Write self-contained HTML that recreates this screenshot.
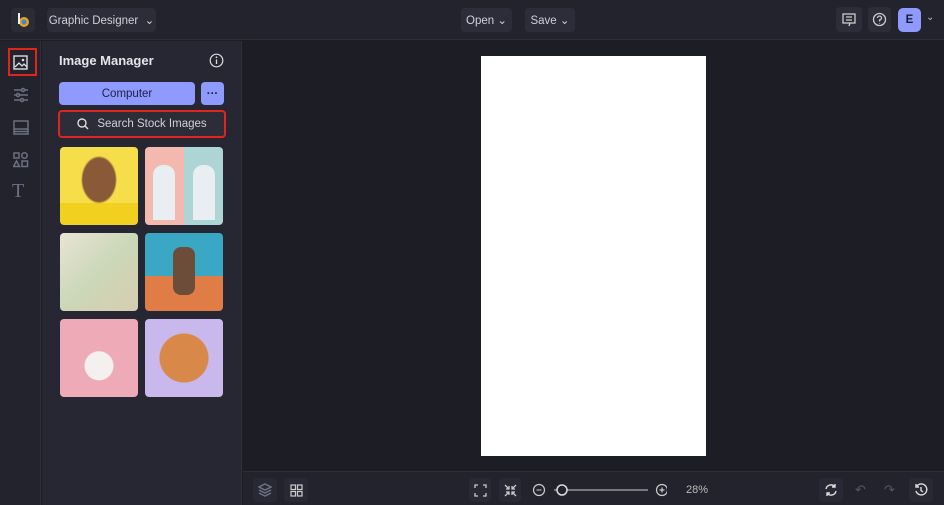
<!DOCTYPE html><html><head><style>
*{margin:0;padding:0;box-sizing:border-box}
body{width:944px;height:505px;overflow:hidden;background:#1c1d25;font-family:"Liberation Sans",sans-serif;position:relative;color:#dfe0e8}
.a{position:absolute}
.btn{position:absolute;background:#2c2d38;border-radius:4px;font-size:11.5px;color:#cfd0d8;display:flex;align-items:center;justify-content:center;white-space:nowrap}
.ic{position:absolute;stroke:#6d7082;fill:none;stroke-width:1.5}
</style></head><body>
<div class="a" style="left:0;top:0;width:944px;height:40px;background:#22232c;border-bottom:1px solid #2e2f3a"></div>
<div class="btn" style="left:11px;top:8px;width:24px;height:24px;background:#2a2b35"><svg width="18" height="18"><circle cx="10" cy="11" r="5" fill="#e8a020"/><circle cx="10" cy="11" r="2.5" fill="#3a8ad0"/><rect x="4" y="2" width="2" height="11" fill="#eee"/></svg></div>
<div class="btn" style="left:47px;top:8px;width:109px;height:24px">Graphic Designer&nbsp;&nbsp;⌄</div>
<div class="btn" style="left:461px;top:8px;width:51px;height:24px">Open&nbsp;⌄</div>
<div class="btn" style="left:525px;top:8px;width:50px;height:24px">Save&nbsp;⌄</div>
<div class="btn" style="left:836px;top:7px;width:26px;height:25px"><svg width="14" height="14" style="stroke:#ccc;fill:none;stroke-width:1.3"><rect x="1" y="1" width="12" height="9"/><path d="M4 4h6M4 7h6M8 10l-1 3"/></svg></div>
<div class="btn" style="left:868px;top:7px;width:23px;height:25px"><svg width="15" height="15" style="stroke:#ccc;fill:none;stroke-width:1.3"><circle cx="7.5" cy="7.5" r="6"/><path d="M5.5 6a2 2 0 1 1 2 2v1.5M7.5 11v.5"/></svg></div>
<div class="btn" style="left:898px;top:8px;width:23px;height:24px;background:#8f9aff;color:#1d1f30;font-weight:bold;border-radius:5px">E</div>
<div class="a" style="left:926px;top:12px;font-size:10px;color:#bbb">⌄</div>
<div class="a" style="left:0;top:41px;width:41px;height:464px;background:#22232c;border-right:1px solid #2e2f3a"></div>
<div class="a" style="left:8px;top:48px;width:29px;height:28px;border:2px solid #e0261c"></div>
<svg class="a" style="left:13px;top:55px" width="15" height="15"><rect x="1" y="1" width="13" height="13" fill="none" stroke="#ddd" stroke-width="1.4"/><path d="M2 12l4-4 3 3 2-2 3 3" stroke="#ddd" fill="none" stroke-width="1.3"/><circle cx="10" cy="5" r="1.3" fill="#ddd"/></svg>
<svg class="ic" style="left:13px;top:87px" width="16" height="16"><path d="M1 3h14M1 8h14M1 13h14"/><circle cx="10" cy="3" r="1.5" fill="#22232c"/><circle cx="5" cy="8" r="1.5" fill="#22232c"/><circle cx="9" cy="13" r="1.5" fill="#22232c"/></svg>
<svg class="ic" style="left:13px;top:120px" width="16" height="15"><rect x="1" y="1" width="14" height="13"/><path d="M1 9h14M1 11.5h14"/></svg>
<svg class="ic" style="left:13px;top:152px" width="16" height="16"><rect x="1" y="1" width="5" height="5"/><circle cx="11.5" cy="3.5" r="2.7"/><path d="M3.5 9l3 5.5h-6z"/><rect x="9" y="9" width="5.5" height="5.5"/></svg>
<div class="a" style="left:12px;top:180px;font-size:20px;color:#6d7082;font-family:'Liberation Serif',serif">T</div>
<div class="a" style="left:42px;top:41px;width:200px;height:464px;background:#262732;border-right:1px solid #2e2f3a"></div>
<div class="a" style="left:59px;top:53px;font-size:13px;font-weight:bold;color:#e4e5ec">Image Manager</div>
<svg class="a" style="left:209px;top:53px" width="15" height="15"><circle cx="7.5" cy="7.5" r="6.3" fill="none" stroke="#ddd" stroke-width="1.2"/><path d="M7.5 6.5v4.5" stroke="#ddd" stroke-width="1.3"/><circle cx="7.5" cy="4.3" r=".9" fill="#ddd"/></svg>
<div class="btn" style="left:59px;top:82px;width:136px;height:23px;background:#8f9aff;color:#1d2040;font-size:11.5px">Computer</div>
<div class="btn" style="left:201px;top:82px;width:23px;height:23px;background:#8f9aff;color:#1d2040;font-weight:bold">···</div>
<div class="btn" style="left:58px;top:110px;width:168px;height:28px;background:#2c2d38;border:2px solid #e0261c;font-size:11.5px"><svg width="12" height="12" style="margin-right:8px"><circle cx="5" cy="5" r="4" fill="none" stroke="#ddd" stroke-width="1.4"/><path d="M8 8l3 3" stroke="#ddd" stroke-width="1.4"/></svg>Search Stock Images</div>
<div class="a" style="left:60px;top:147px;width:78px;height:78px;border-radius:4px;background:radial-gradient(ellipse 18px 24px at 50% 42%,#8a5a38 0 90%,transparent 100%),linear-gradient(#f6de4a 72%,#f2d020 72%)"></div>
<div class="a" style="left:145px;top:147px;width:78px;height:78px;border-radius:4px;background:linear-gradient(90deg,#f3b9ae 50%,#aed5d6 50%)"><div class="a" style="left:8px;top:18px;width:22px;height:55px;background:#e8eef2;border-radius:10px 10px 0 0"></div><div class="a" style="left:48px;top:18px;width:22px;height:55px;background:#e8eef2;border-radius:10px 10px 0 0"></div></div>
<div class="a" style="left:60px;top:233px;width:78px;height:78px;border-radius:4px;background:linear-gradient(135deg,#e8e4d4,#cbd7b8 50%,#d8cdb0)"></div>
<div class="a" style="left:145px;top:233px;width:78px;height:78px;border-radius:4px;background:linear-gradient(#3aa8c4 55%,#e07c45 55%)"><div class="a" style="left:28px;top:14px;width:22px;height:48px;background:#6b4d3a;border-radius:8px"></div></div>
<div class="a" style="left:60px;top:319px;width:78px;height:78px;border-radius:4px;background:radial-gradient(circle at 50% 60%,#f5f0f0 0 14px,transparent 15px),#efaab8"></div>
<div class="a" style="left:145px;top:319px;width:78px;height:78px;border-radius:4px;background:radial-gradient(circle at 50% 50%,#d88848 0 24px,transparent 25px),#c9b8ec"></div>
<div class="a" style="left:481px;top:56px;width:225px;height:400px;background:#fff"></div>
<div class="a" style="left:243px;top:471px;width:701px;height:34px;background:#22232c;border-top:1px solid #2e2f3a"></div>
<div class="btn" style="left:253px;top:478px;width:24px;height:24px;background:#282934"></div>
<svg class="ic" style="left:258px;top:483px" width="14" height="14"><path d="M7 1l6 3-6 3-6-3zM1 7l6 3 6-3M1 10l6 3 6-3"/></svg>
<div class="btn" style="left:284px;top:478px;width:24px;height:24px;background:#282934"><svg width="13" height="13" style="stroke:#ccc;fill:none;stroke-width:1.2"><rect x="1" y="1" width="4.5" height="4.5"/><rect x="7.5" y="1" width="4.5" height="4.5"/><rect x="1" y="7.5" width="4.5" height="4.5"/><rect x="7.5" y="7.5" width="4.5" height="4.5"/></svg></div>
<div class="btn" style="left:469px;top:478px;width:22px;height:24px;background:#282934"><svg width="13" height="13" style="stroke:#ccc;fill:none;stroke-width:1.3"><path d="M1 4V1h3M9 1h3v3M12 9v3H9M4 12H1V9"/></svg></div>
<div class="btn" style="left:499px;top:478px;width:22px;height:24px;background:#282934"><svg width="13" height="13" style="stroke:#ccc;fill:none;stroke-width:1.3"><path d="M1 1l4 4M5 2v3H2M12 1L8 5M8 2v3h3M1 12l4-4M2 8h3v3M12 12L8 8M11 8H8v3"/></svg></div>
<svg class="a" style="left:532px;top:483px" width="135" height="14"><circle cx="7" cy="7" r="5.5" fill="none" stroke="#ccc" stroke-width="1.2"/><path d="M4.5 7h5M22 7h94" stroke="#ccc" stroke-width="1.1"/><circle cx="30" cy="7" r="5" fill="#22232c" stroke="#ddd" stroke-width="1.5"/><circle cx="130" cy="7" r="5.5" fill="none" stroke="#ccc" stroke-width="1.2"/><path d="M127.5 7h5M130 4.5v5" stroke="#ccc" stroke-width="1.2"/></svg>
<div class="a" style="left:686px;top:484px;font-size:11px;color:#bbb">28%</div>
<div class="btn" style="left:819px;top:478px;width:24px;height:24px;background:#282934"><svg width="14" height="14" style="stroke:#ddd;fill:none;stroke-width:1.4"><path d="M2 6a5 5 0 0 1 9-2M12 8a5 5 0 0 1-9 2M11 1v3H8M3 13v-3h3"/></svg></div>
<div class="a" style="left:855px;top:482px;font-size:13px;color:#555866">↶</div>
<div class="a" style="left:884px;top:482px;font-size:13px;color:#555866">↷</div>
<div class="btn" style="left:909px;top:478px;width:24px;height:24px;background:#282934"><svg width="14" height="14" style="stroke:#ddd;fill:none;stroke-width:1.4"><path d="M3 3a5.5 5.5 0 1 1-1 5M2 1v3h3M7 4v3.5l2 1.5"/></svg></div>
</body></html>
